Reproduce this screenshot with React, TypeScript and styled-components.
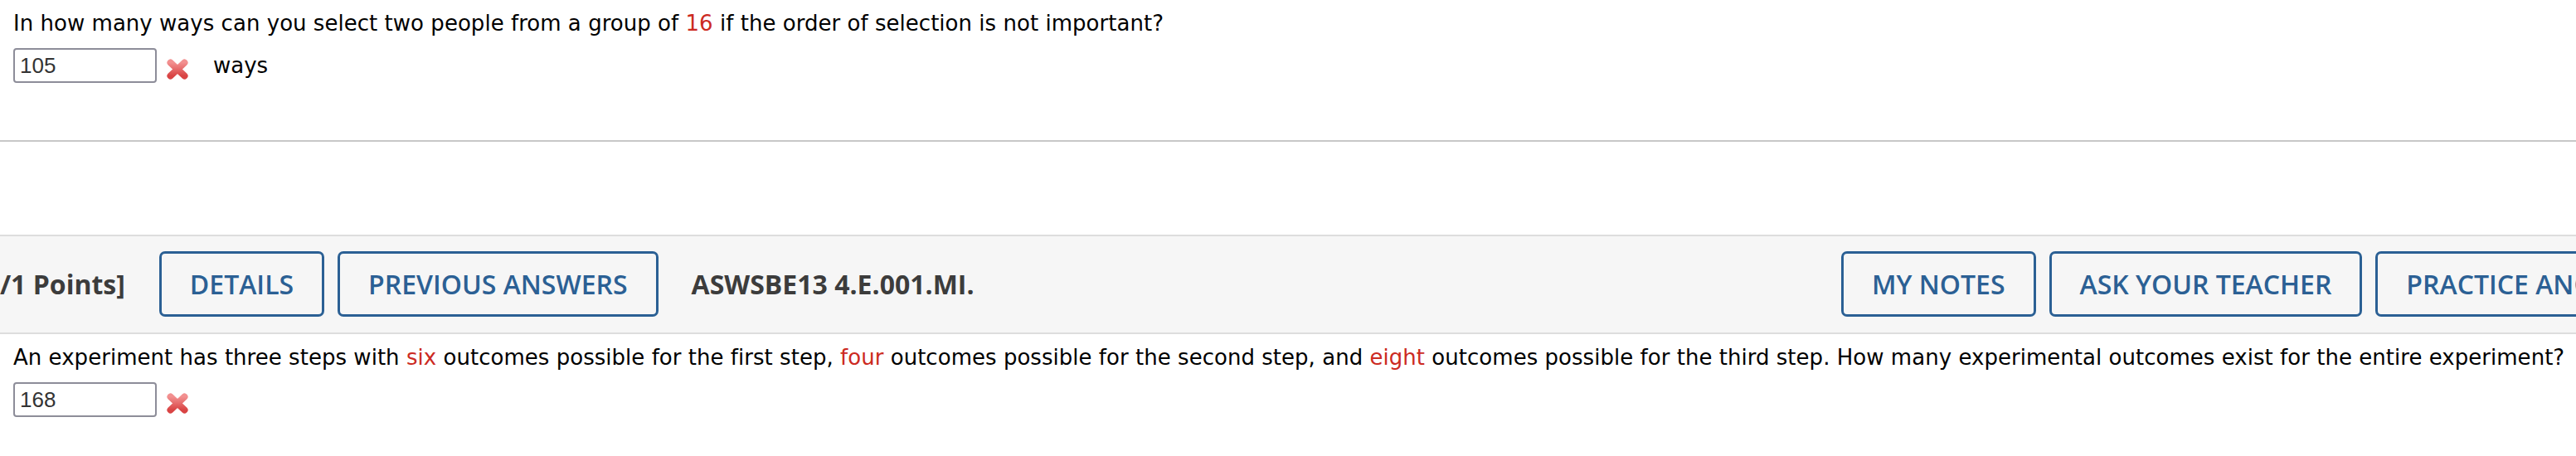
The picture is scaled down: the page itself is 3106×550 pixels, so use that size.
import React from 'react';
import styled, { createGlobalStyle } from 'styled-components';

const GlobalStyle = createGlobalStyle`
  html, body {
    margin: 0;
    padding: 0;
    background: #ffffff;
    overflow: hidden;
  }
`;

const Page = styled.div`
  width: 100%;
  font-family: "DejaVu Sans", Verdana, sans-serif;
  color: #000;
`;

const QuestionBlock = styled.div`
  padding: 10px 0 0 16px;
`;

const QuestionText = styled.div`
  font-size: 26px;
  line-height: 36px;
  letter-spacing: 0.03px;
  white-space: nowrap;
`;

const Red = styled.span`
  color: #cc2a22;
`;

const AnswerRow = styled.div`
  display: flex;
  align-items: center;
  margin-top: 12px;
`;

const AnswerInput = styled.input`
  box-sizing: border-box;
  width: 173px;
  height: 42px;
  border: 2px solid #8d8d99;
  border-radius: 4px;
  padding: 0 6px;
  font-family: "Liberation Sans", Arial, sans-serif;
  font-size: 26px;
  color: #333;
  background: #fff;
  outline: none;
`;

const WrongMark = styled.svg`
  width: 28px;
  height: 27px;
  margin-left: 11px;
  margin-top: 9px;
  flex-shrink: 0;
`;

const Unit = styled.span`
  margin-left: 29px;
  font-size: 26px;
  line-height: 30px;
`;

const Divider = styled.hr`
  margin: 69px 0 0;
  border: 0;
  height: 2px;
  background: #c8c8c8;
`;

const HeaderBar = styled.div`
  display: flex;
  align-items: center;
  margin-top: 112px;
  padding: 18px 0 19px 0;
  background: #f6f6f6;
  border-top: 2px solid #dddddd;
  border-bottom: 2px solid #dddddd;
`;

const Points = styled.span`
  margin-left: -29px;
  margin-right: 41px;
  font-family: "Open Sans", sans-serif;
  font-weight: 700;
  font-size: 32px;
  color: #3c3c3c;
  white-space: nowrap;
`;

const ButtonGroup = styled.div<{ $right?: boolean }>`
  display: flex;
  align-items: center;
  gap: 16px;
  ${(p) => (p.$right ? 'margin-left: auto; flex: 0 0 886px; min-width: 0;' : '')}
`;

const BarButton = styled.button`
  box-sizing: border-box;
  flex-shrink: 0;
  height: 79px;
  padding: 0 34px;
  border: 3px solid #2b6094;
  border-radius: 7px;
  background: transparent;
  font-family: "Open Sans", sans-serif;
  font-weight: 600;
  font-size: 32px;
  color: #2b6094;
  white-space: nowrap;
`;

const ItemTitle = styled.span`
  margin-left: 40px;
  font-family: "Open Sans", sans-serif;
  font-weight: 700;
  font-size: 32px;
  color: #3c3c3c;
  white-space: nowrap;
`;

const XMark: React.FC = () => (
  <WrongMark viewBox="0 0 28 27">
    <defs>
      <linearGradient id="xg" x1="0" y1="0" x2="0" y2="1">
        <stop offset="0" stopColor="#f29090" />
        <stop offset="1" stopColor="#d94444" />
      </linearGradient>
    </defs>
    <g stroke="url(#xg)" strokeWidth="8" strokeLinecap="round">
      <line x1="5.5" y1="5.5" x2="22.5" y2="21.5" />
      <line x1="22.5" y1="5.5" x2="5.5" y2="21.5" />
    </g>
  </WrongMark>
);

const App: React.FC = () => (
  <Page>
    <GlobalStyle />
    <QuestionBlock>
      <QuestionText>
        In how many ways can you select two people from a group of <Red>16</Red> if the order of selection is not important?
      </QuestionText>
      <AnswerRow>
        <AnswerInput defaultValue="105" />
        <XMark />
        <Unit>ways</Unit>
      </AnswerRow>
    </QuestionBlock>

    <Divider />

    <HeaderBar>
      <Points>[0/1 Points]</Points>
      <ButtonGroup>
        <BarButton>DETAILS</BarButton>
        <BarButton>PREVIOUS ANSWERS</BarButton>
      </ButtonGroup>
      <ItemTitle>ASWSBE13 4.E.001.MI.</ItemTitle>
      <ButtonGroup $right>
        <BarButton>MY NOTES</BarButton>
        <BarButton>ASK YOUR TEACHER</BarButton>
        <BarButton>PRACTICE ANOTHER</BarButton>
      </ButtonGroup>
    </HeaderBar>

    <QuestionBlock>
      <QuestionText>
        An experiment has three steps with <Red>six</Red> outcomes possible for the first step, <Red>four</Red> outcomes possible for the second step, and <Red>eight</Red> outcomes possible for the third step. How many experimental outcomes exist for the entire experiment?
      </QuestionText>
      <AnswerRow>
        <AnswerInput defaultValue="168" />
        <XMark />
      </AnswerRow>
    </QuestionBlock>
  </Page>
);

export default App;
